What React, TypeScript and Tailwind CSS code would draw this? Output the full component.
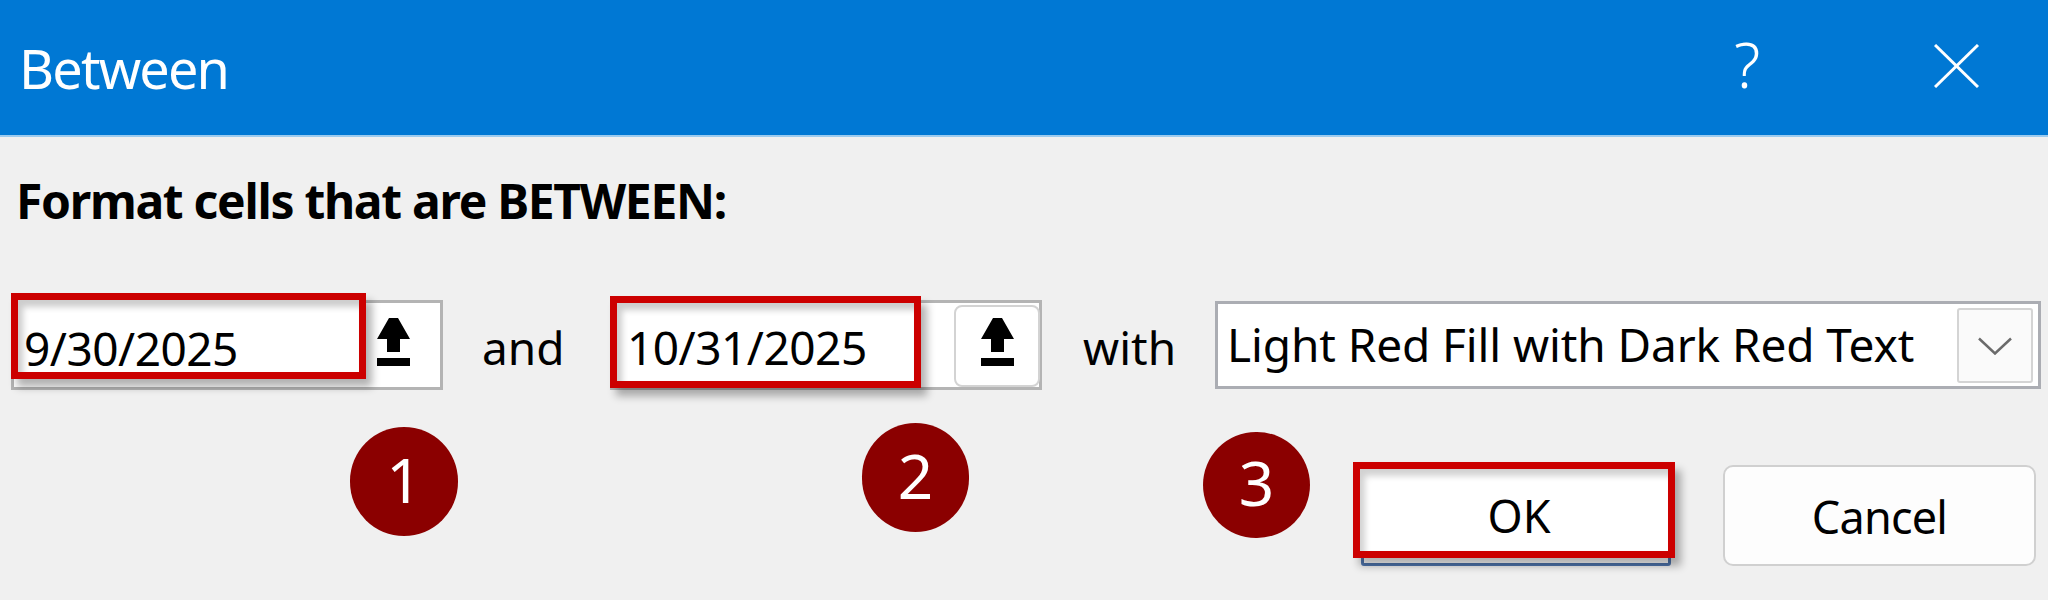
import React from "react";

function UpArrow() {
  return (
    <svg width="33" height="48" viewBox="0 0 33 48">
      <polygon points="12,0 21,0 33,21 23,21 23,34 10,34 10,21 0,21" fill="#000" />
      <rect x="0" y="40" width="33" height="8" fill="#000" />
    </svg>
  );
}

function Chevron() {
  return (
    <svg width="34" height="18" viewBox="0 0 34 18">
      <polyline points="1,1.5 17,16.5 33,1.5" fill="none" stroke="#6b6b6b" strokeWidth="2.5" />
    </svg>
  );
}

function CloseX() {
  return (
    <svg width="45" height="44" viewBox="0 0 45 44" className="self-start mt-[44px] ml-[173px] mr-[69px]">
      <line x1="1" y1="1" x2="44" y2="43" stroke="#fff" strokeWidth="3" />
      <line x1="44" y1="1" x2="1" y2="43" stroke="#fff" strokeWidth="3" />
    </svg>
  );
}

export default function App() {
  return (
    <div className="w-[2048px] h-[600px] bg-[#f0f0f0] overflow-hidden font-['Noto_Sans',sans-serif] text-black">
      {/* Title bar */}
      <div className="h-[137px] bg-[#0078d4] border-b-2 border-[#9ccbef] flex items-center text-white">
        <div className="pl-[19px] text-[54px] tracking-[-1.8px] leading-none">Between</div>
        <div className="flex-1" />
        <div className="self-start mt-[33px] w-[27px] text-[62px] font-light leading-none">?</div>
        <CloseX />
      </div>

      {/* Heading */}
      <div className="mt-[40px] pl-[16px] text-[48px] font-bold tracking-[-1.3px] leading-none">
        Format cells that are BETWEEN:
      </div>

      {/* Fields row */}
      <div className="mt-[75px] flex items-start">
        {/* Field 1 */}
        <div className="ml-[11px] w-[432px] h-[90px] shrink-0 border-[3px] border-[#b4b4b4] bg-white flex">
          <div className="-ml-[3px] -mt-[10px] w-[355px] h-[86px] shrink-0 border-[7px] border-[#cc0000] bg-white shadow-[6px_8px_8px_rgba(0,0,0,0.3),inset_5px_7px_6px_rgba(0,0,0,0.2)] pl-[6px] pt-[25px] text-[46px] leading-none tracking-[-0.5px]">
            9/30/2025
          </div>
          <div className="pl-[11px] pt-[15px]">
            <UpArrow />
          </div>
        </div>

        <div className="w-[167px] shrink-0 pl-[39px] pt-[24px] text-[46px] leading-none">and</div>

        {/* Field 2 */}
        <div className="w-[432px] h-[90px] shrink-0 border-[3px] border-[#b4b4b4] bg-white flex">
          <div className="-ml-[3px] -mt-[7px] w-[311px] h-[92px] shrink-0 border-[7px] border-[#cc0000] bg-white shadow-[6px_8px_8px_rgba(0,0,0,0.3),inset_5px_7px_6px_rgba(0,0,0,0.2)] pl-[10px] pt-[21px] text-[46px] leading-none tracking-[-0.5px]">
            10/31/2025
          </div>
          <div className="ml-[33px] mt-[2px] w-[86px] h-[82px] shrink-0 border-2 border-[#d3d3d3] rounded-[8px] bg-white flex justify-center pt-[11px]">
            <UpArrow />
          </div>
        </div>

        <div className="w-[173px] shrink-0 pl-[41px] pt-[24px] text-[46px] leading-none">with</div>

        {/* Combo */}
        <div className="mt-[1px] w-[826px] h-[88px] shrink-0 border-[3px] border-[#abadb3] bg-white flex">
          <div className="pl-[9px] pt-[17px] text-[46px] leading-none tracking-[-0.1px] whitespace-nowrap">
            Light Red Fill with Dark Red Text
          </div>
          <div className="ml-auto mr-[5px] mt-[4px] w-[76px] h-[75px] shrink-0 border-2 border-[#d4d4d4] bg-[#fafafa] rounded-[3px] flex items-center justify-center">
            <Chevron />
          </div>
        </div>
      </div>

      {/* Bottom row */}
      <div className="mt-[30px] flex items-start">
        <div className="ml-[350px] mt-[7px] w-[108px] h-[109px] shrink-0 rounded-full bg-[#8b0000] text-white text-[62px] leading-none flex items-center justify-center pb-[6px]">
          1
        </div>
        <div className="ml-[404px] mt-[3px] w-[107px] h-[109px] shrink-0 rounded-full bg-[#8b0000] text-white text-[62px] leading-none flex items-center justify-center pb-[6px]">
          2
        </div>
        <div className="ml-[234px] mt-[12px] w-[107px] h-[106px] shrink-0 rounded-full bg-[#8b0000] text-white text-[62px] leading-none flex items-center justify-center pb-[6px]">
          3
        </div>

        {/* OK */}
        <div className="ml-[51px] mt-[48px] w-[310px] h-[98px] shrink-0 border-[3px] border-[#4f75ad] rounded-[3px] bg-white">
          <div className="-ml-[11px] -mt-[9px] w-[322px] h-[96px] border-[7px] border-[#cc0000] bg-white shadow-[6px_8px_8px_rgba(0,0,0,0.3),inset_5px_7px_6px_rgba(0,0,0,0.18)] text-center pl-[10px] pt-[24px] text-[45px] leading-none">
            OK
          </div>
        </div>

        {/* Cancel */}
        <div className="ml-[52px] mt-[45px] w-[313px] h-[101px] shrink-0 border-2 border-[#d0d0d0] rounded-[10px] bg-[#fdfdfd] text-center pt-[27px] text-[45px] leading-none tracking-[-0.8px]">
          Cancel
        </div>
      </div>
    </div>
  );
}
